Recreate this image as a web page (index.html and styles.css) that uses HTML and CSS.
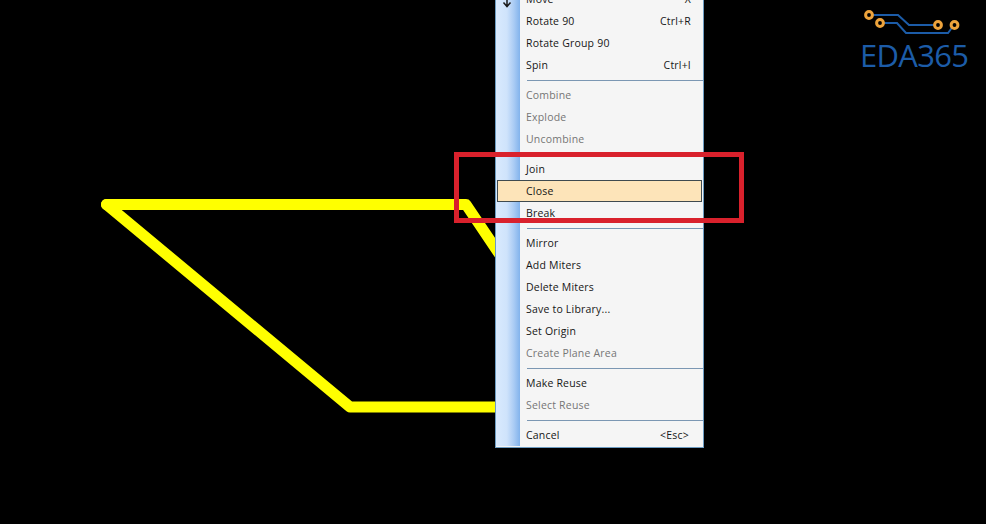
FILE: index.html
```html
<!DOCTYPE html>
<html lang="en">
<head>
  <meta charset="UTF-8" />
  <title>EDA365 Context Menu</title>
  <link rel="stylesheet" href="styles.css">
</head>
<body>
  <div class="canvas">
    <svg class="traces" width="986" height="524" viewBox="0 0 986 524">
      <polyline points="106.5,204.5 466,204.5 500,255" />
      <polyline points="106.5,204.5 350,407 500,407" />
    </svg>

    <div class="menu">
      <div class="menu-strip">
        <svg class="move-icon" width="12" height="8" viewBox="0 0 12 8">
          <path d="M6 0V6M2.5 2.5L6 6.5L9.5 2.5" />
        </svg>
      </div>
      <ul class="menu-list">
        <li class="item"><span>Move</span><span>X</span></li>
        <li class="item"><span>Rotate 90</span><span>Ctrl+R</span></li>
        <li class="item"><span>Rotate Group 90</span></li>
        <li class="item"><span>Spin</span><span>Ctrl+I</span></li>
        <li class="sep"></li>
        <li class="item disabled"><span>Combine</span></li>
        <li class="item disabled"><span>Explode</span></li>
        <li class="item disabled"><span>Uncombine</span></li>
        <li class="sep"></li>
        <li class="item"><span>Join</span></li>
        <li class="item active"><span>Close</span></li>
        <li class="item"><span>Break</span></li>
        <li class="sep"></li>
        <li class="item"><span>Mirror</span></li>
        <li class="item"><span>Add Miters</span></li>
        <li class="item"><span>Delete Miters</span></li>
        <li class="item"><span>Save to Library...</span></li>
        <li class="item"><span>Set Origin</span></li>
        <li class="item disabled"><span>Create Plane Area</span></li>
        <li class="sep"></li>
        <li class="item"><span>Make Reuse</span></li>
        <li class="item disabled"><span>Select Reuse</span></li>
        <li class="sep"></li>
        <li class="item"><span>Cancel</span><span class="esc">&lt;Esc&gt;</span></li>
      </ul>
    </div>

    <div class="callout"></div>

    <div class="logo">
      <svg class="logo-art" width="110" height="36" viewBox="0 0 110 36">
        <path class="wire" d="M9 15H38L49 25H78" />
        <path class="wire" d="M20 23H37L46 33H88L94 25" />
        <circle class="pad" cx="9" cy="15" r="3.4" />
        <circle class="pad" cx="20" cy="23" r="3.4" />
        <circle class="pad" cx="78" cy="25" r="3.4" />
        <circle class="pad" cx="94.5" cy="25" r="3.4" />
      </svg>
      <div class="logo-text">EDA365</div>
    </div>
  </div>
</body>
</html>
```

FILE: styles.css
```css
body {
  margin: 0;
  background-color: #000;
  font-family: "Open Sans", "Noto Sans", sans-serif;
}

.canvas {
  position: relative;
  width: 986px;
  height: 524px;
  overflow: hidden;
}

.traces {
  position: absolute;
  left: 0;
  top: 0;
}

.traces polyline {
  fill: none;
  stroke: #ffff00;
  stroke-width: 11;
  stroke-linejoin: round;
  stroke-linecap: round;
}

.menu {
  position: absolute;
  left: 495px;
  top: -14px;
  width: 207px;
  display: flex;
  padding-bottom: 1px;
  background-color: #f5f5f5;
  border: 1px solid #6d9cc2;
}

.menu-strip {
  position: relative;
  width: 24px;
  flex-shrink: 0;
  background: linear-gradient(to right, #d9eafe 0%, #cfe3fb 45%, #a9cbf4 75%, #82b3ec 100%);
}

.move-icon {
  position: absolute;
  left: 5px;
  top: 13px;
}

.move-icon path {
  fill: none;
  stroke: #1a1a1a;
  stroke-width: 1.5;
}

.menu-list {
  flex: 1;
  list-style: none;
  margin: 0;
  padding: 1px 0 0;
}

.item {
  display: flex;
  justify-content: space-between;
  align-items: center;
  height: 22px;
  padding: 0 12px 0 6px;
  font-size: 10.5px;
  letter-spacing: 0.2px;
  color: #151515;
}

.item.disabled {
  color: #757575;
}

/* highlight runs back over the blue strip */
.item.active {
  position: relative;
  z-index: 1;
  box-sizing: border-box;
  margin: 0 1px 0 -23px;
  padding-left: 28px;
  background-color: #fde4b9;
  border: 1px solid #3f4a4f;
}

.item .esc {
  padding-right: 2px;
}

.sep {
  height: 1px;
  margin: 4px 0 3px 7px;
  background-color: #7b97b3;
}

.callout {
  position: absolute;
  z-index: 2;
  left: 454px;
  top: 152px;
  width: 280px;
  height: 61px;
  border: 5px solid #d9212c;
}

.logo {
  position: absolute;
  left: 860px;
  top: 0;
  width: 112px;
  height: 70px;
}

.logo-art {
  display: block;
}

.wire {
  fill: none;
  stroke: #1c5ca8;
  stroke-width: 2;
}

.pad {
  fill: #000;
  stroke: #eda33c;
  stroke-width: 3;
}

.logo-text {
  margin-top: 4px;
  font-family: "Open Sans", sans-serif;
  font-size: 31px;
  font-weight: 500;
  line-height: 30px;
  letter-spacing: -0.7px;
  color: #1c5ca8;
}
```
